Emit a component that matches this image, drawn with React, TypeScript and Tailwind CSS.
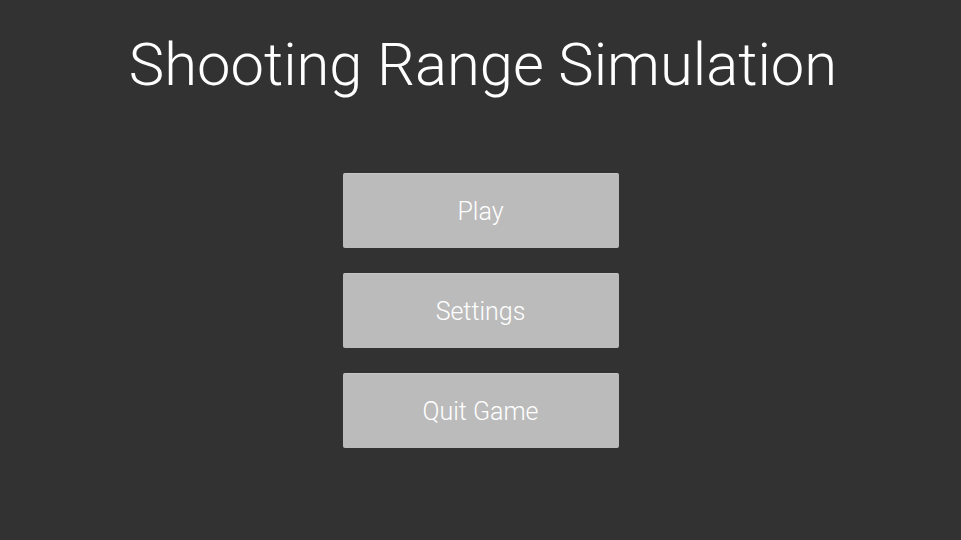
const buttons = ['Play', 'Settings', 'Quit Game'];

export default function App() {
  return (
    <div
      className="flex h-[540px] w-[961px] flex-col items-center bg-[#323232] text-white"
      style={{ fontFamily: 'Roboto, "Open Sans", sans-serif' }}
    >
      <h1 className="mt-[35px] h-[60px] pl-[5px] text-[59.7px] font-light leading-[60px]">
        Shooting Range Simulation
      </h1>
      <div className="mt-[78px] flex flex-col gap-[25px]">
        {buttons.map((label) => (
          <button
            key={label}
            className="flex h-[75px] w-[276px] items-center justify-center rounded-[2px] border-t border-[#c6c6c6] bg-[#bbbbbb] pt-[2px] text-[25px] font-light text-white"
          >
            {label}
          </button>
        ))}
      </div>
    </div>
  );
}
